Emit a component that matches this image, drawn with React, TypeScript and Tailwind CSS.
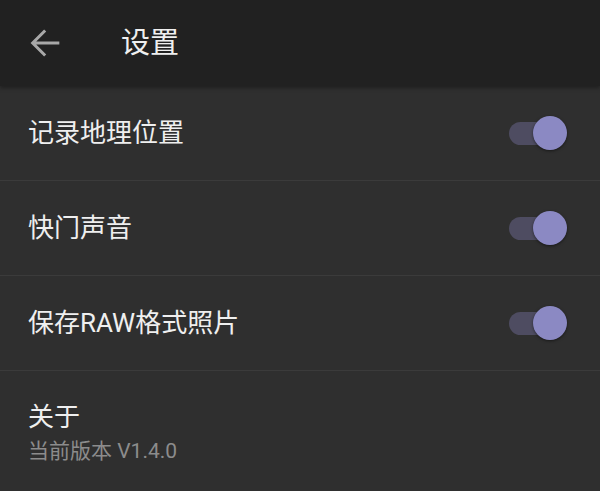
import React from "react";

function Toggle() {
  return (
    <div className="relative w-[58px] h-[34px] flex items-center">
      <div className="w-[56px] h-[23px] rounded-full bg-[#4e4c61]" />
      <div className="absolute right-0 top-[0px] w-[34px] h-[34px] rounded-full bg-[#8b89c3] shadow-[0_1px_3px_rgba(0,0,0,0.5)]" />
    </div>
  );
}

function Row({ label }: { label: string }) {
  return (
    <div className="h-[95px] flex items-center justify-between pl-[28px] pr-[33px] border-b border-[#3b3b3b]">
      <span className="text-[26px] text-[#efefef] leading-none">{label}</span>
      <Toggle />
    </div>
  );
}

export default function App() {
  return (
    <div
      className="w-[600px] h-[491px] bg-[#2f2f2f] overflow-hidden"
      style={{ fontFamily: '"Roboto", "Noto Sans CJK SC", sans-serif' }}
    >
      <div className="h-[86px] bg-[#212121] flex items-center relative z-10 shadow-[0_2px_4px_rgba(0,0,0,0.35)]">
        <div className="w-[121px] flex items-center pl-[26px]">
          <svg width="40" height="40" viewBox="0 0 24 24" fill="none">
            <path d="M20 12H4.5M11.5 4.5L4 12l7.5 7.5" stroke="#a8a8a8" strokeWidth="1.8" />
          </svg>
        </div>
        <span className="text-[29px] text-[#efefef] leading-none">设置</span>
      </div>
      <Row label="记录地理位置" />
      <Row label="快门声音" />
      <Row label="保存RAW格式照片" />
      <div className="pl-[28px] pt-[33px] flex flex-col">
        <span className="text-[26px] text-[#efefef] leading-none">关于</span>
        <span className="text-[21px] text-[#8c8c8c] leading-none mt-[11px]">当前版本 V1.4.0</span>
      </div>
    </div>
  );
}
